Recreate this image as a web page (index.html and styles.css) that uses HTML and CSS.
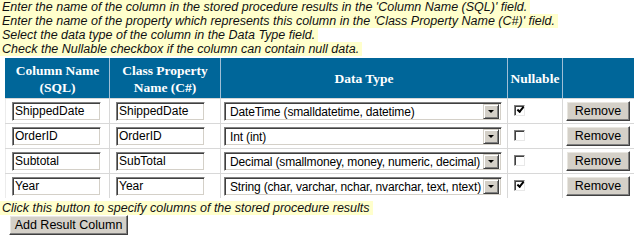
FILE: index.html
```html
<!DOCTYPE html>
<html>
<head>
<meta charset="utf-8">
<link rel="stylesheet" href="styles.css">
</head>
<body>
<div class="hints">
  <div class="hint">Enter the name of the column in the stored procedure results in the 'Column Name (SQL)' field.</div>
  <div class="hint">Enter the name of the property which represents this column in the 'Class Property Name (C#)' field.</div>
  <div class="hint">Select the data type of the column in the Data Type field.</div>
  <div class="hint">Check the Nullable checkbox if the column can contain null data.</div>
</div>
<table class="grid">
  <colgroup>
    <col class="w1"><col class="w2"><col class="w3"><col class="w4"><col class="w5">
  </colgroup>
  <thead>
    <tr>
      <th>Column Name<br>(SQL)</th>
      <th>Class Property<br>Name (C#)</th>
      <th>Data Type</th>
      <th>Nullable</th>
      <th></th>
    </tr>
  </thead>
  <tbody>
    <tr>
      <td class="pw"><span class="field">ShippedDate</span></td>
      <td class="pw"><span class="field">ShippedDate</span></td>
      <td class="pn"><div class="combo"><span class="val">DateTime (smalldatetime, datetime)</span><span class="arrow"></span></div></td>
      <td class="pw"><span class="check on"></span></td>
      <td class="pn"><button class="btn remove">Remove</button></td>
    </tr>
    <tr>
      <td class="pw"><span class="field">OrderID</span></td>
      <td class="pw"><span class="field">OrderID</span></td>
      <td class="pn"><div class="combo"><span class="val">Int (int)</span><span class="arrow"></span></div></td>
      <td class="pw"><span class="check"></span></td>
      <td class="pn"><button class="btn remove">Remove</button></td>
    </tr>
    <tr>
      <td class="pw"><span class="field">Subtotal</span></td>
      <td class="pw"><span class="field">SubTotal</span></td>
      <td class="pn"><div class="combo"><span class="val">Decimal (smallmoney, money, numeric, decimal)</span><span class="arrow"></span></div></td>
      <td class="pw"><span class="check"></span></td>
      <td class="pn"><button class="btn remove">Remove</button></td>
    </tr>
    <tr>
      <td class="pw"><span class="field">Year</span></td>
      <td class="pw"><span class="field">Year</span></td>
      <td class="pn"><div class="combo"><span class="val">String (char, varchar, nchar, nvarchar, text, ntext)</span><span class="arrow"></span></div></td>
      <td class="pw"><span class="check on"></span></td>
      <td class="pn"><button class="btn remove">Remove</button></td>
    </tr>
  </tbody>
</table>
<div class="hint foot">Click this button to specify columns of the stored procedure results</div>
<div class="actions"><button class="btn add">Add Result Column</button></div>
</body>
</html>
```

FILE: styles.css
```css
html, body {
  margin: 0;
  padding: 0;
  background: #ffffff;
  font-family: "Liberation Sans", Arial, sans-serif;
  font-size: 12px;
  color: #000;
}

.hint {
  display: table;
  background: #ffffcc;
  font-style: italic;
  font-size: 12.5px;
  line-height: 14px;
  padding: 0 3px 0 2px;
  color: #111;
}

.grid {
  margin: 2px 0 0 5px;
  border-collapse: collapse;
  table-layout: fixed;
  width: 628px;
}

.w1 { width: 104px; }
.w2 { width: 111px; }
.w3 { width: 287px; }
.w4 { width: 55px; }
.w5 { width: 71px; }

.grid th {
  background: #006699;
  color: #ffffff;
  font-family: "Liberation Serif", "Times New Roman", serif;
  font-weight: bold;
  font-size: 13.5px;
  line-height: 17px;
  height: 39px;
  padding: 0;
  text-align: center;
  vertical-align: middle;
  border: 1px solid #9fbfd6;
  border-top-color: #006699;
  border-bottom-color: #d6d6d6;
}
.grid th:first-child { border-left-color: #006699; }
.grid th:last-child { border-right-color: #006699; }

.grid td {
  height: 24px;
  border: 1px solid #d8d8d8;
  vertical-align: middle;
  padding: 0;
}
.grid td:first-child { border-left-color: #ececec; }
.grid td:last-child { border-right-color: #ffffff; }
.grid tr:last-child td { border-bottom-color: #ffffff; }

.pw { padding-left: 6px !important; }
.pn { padding-left: 3px !important; }

.field {
  display: block;
  box-sizing: border-box;
  width: 89px;
  height: 19px;
  line-height: 15px;
  padding: 1px 0 0 2px;
  background: #fff;
  border: 1px solid;
  border-color: #808080 #ffffff #ffffff #808080;
  box-shadow: inset 1px 1px 0 #404040, inset -1px -1px 0 #d4d0c8;
  white-space: nowrap;
  overflow: hidden;
}

.combo {
  display: flex;
  box-sizing: border-box;
  width: 278px;
  height: 19px;
  background: #fff;
  border: 1px solid;
  border-color: #808080 #ffffff #ffffff #808080;
  box-shadow: inset 1px 1px 0 #404040, inset -1px -1px 0 #d4d0c8;
  padding: 1px 2px 1px 1px;
}
.combo .val {
  flex: 1;
  padding: 1px 0 0 4px;
  line-height: 14px;
  letter-spacing: -0.15px;
  white-space: nowrap;
  overflow: hidden;
}
.combo .arrow {
  box-sizing: border-box;
  flex: none;
  width: 16px;
  height: 15px;
  background: #d4d0c8;
  border: 1px solid;
  border-color: #d4d0c8 #404040 #404040 #d4d0c8;
  box-shadow: inset 1px 1px 0 #ffffff, inset -1px -1px 0 #808080;
  display: flex;
  align-items: center;
  justify-content: center;
}
.combo .arrow::after {
  content: "";
  width: 0;
  height: 0;
  margin-top: 1px;
  border-left: 3px solid transparent;
  border-right: 3px solid transparent;
  border-top: 3px solid #000;
}

.check {
  display: block;
  box-sizing: border-box;
  width: 11px;
  height: 11px;
  margin-top: -1px;
  background: #fff;
  border: 1px solid;
  border-color: #808080 #e8e8e8 #e8e8e8 #808080;
  box-shadow: inset 1px 1px 0 #404040;
  position: relative;
}
.check.on::after {
  content: "";
  position: absolute;
  left: 2px;
  top: 1px;
  width: 5px;
  height: 2px;
  border-left: 2px solid #000;
  border-bottom: 2px solid #000;
  transform: rotate(-50deg);
  transform-origin: center;
}

.btn {
  font-family: "Liberation Sans", Arial, sans-serif;
  font-size: 12.5px;
  color: #000;
  background: #d4d0c8;
  border: 1px solid;
  border-color: #ffffff #404040 #404040 #ffffff;
  box-shadow: inset -1px -1px 0 #808080, inset 1px 1px 0 #e8e6e0;
  padding: 0;
  margin: 0;
  box-sizing: border-box;
  line-height: 14px;
  cursor: default;
}
.remove {
  display: block;
  width: 64px;
  height: 20px;
}
.actions {
  padding-left: 9px;
}
.add {
  width: 119px;
  height: 20px;
}
.foot {
  margin-top: 2px;
}
```
